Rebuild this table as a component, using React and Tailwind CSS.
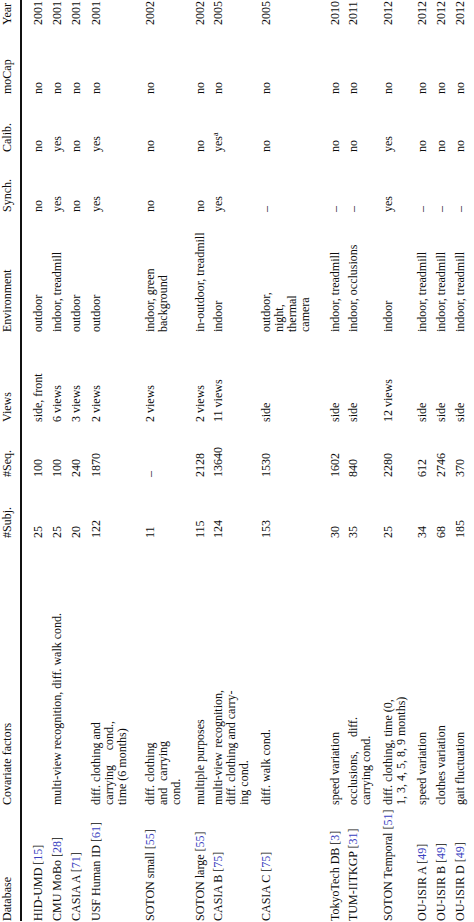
import React from 'react';

const HEAD = ['Database', 'Covariate factors', '#Subj.', '#Seq.', 'Views', 'Environment', 'Synch.', 'Calib.', 'moCap', 'Year'];

// cov lines: a line given as an array of words is set justified over the cell width (cw)
const ROWS = [
  { db: 'HID-UMD', ref: '15', cov: [], subj: '25', seq: '100', views: 'side, front', env: ['outdoor'], synch: 'no', calib: 'no', mocap: 'no', year: '2001', h: 19 },
  { db: 'CMU MoBo', ref: '28', cov: ['multi-view recognition, diff. walk cond.'], subj: '25', seq: '100', views: '6 views', env: ['indoor, treadmill'], synch: 'yes', calib: 'yes', mocap: 'no', year: '2001', h: 19 },
  { db: 'CASIA A', ref: '71', cov: [], subj: '20', seq: '240', views: '3 views', env: ['outdoor'], synch: 'no', calib: 'no', mocap: 'no', year: '2001', h: 20 },
  { db: 'USF Human ID', ref: '61', cw: 84, cov: ['diff. clothing and', ['carrying', 'cond.,'], 'time (6 months)'], subj: '122', seq: '1870', views: '2 views', env: ['outdoor'], synch: 'yes', calib: 'yes', mocap: 'no', year: '2001', h: 54 },
  { db: 'SOTON small', ref: '55', cw: 64, cov: ['diff. clothing', ['and', 'carrying'], 'cond.'], subj: '11', seq: '–', views: '2 views', env: ['indoor, green', 'background'], synch: 'no', calib: 'no', mocap: 'no', year: '2002', h: 50 },
  { db: 'SOTON large', ref: '55', cov: ['multiple purposes'], subj: '115', seq: '2128', views: '2 views', env: ['in-outdoor, treadmill'], synch: 'no', calib: 'no', mocap: 'no', year: '2002', h: 18 },
  { db: 'CASIA B', ref: '75', cw: 115, cov: [['multi-view', 'recognition,'], 'diff. clothing and carry-', 'ing cond.'], subj: '124', seq: '13640', views: '11 views', env: ['indoor'], synch: 'yes', calib: 'yes', sup: 'a', mocap: 'no', year: '2005', h: 48 },
  { db: 'CASIA C', ref: '75', cov: ['diff. walk cond.'], subj: '153', seq: '1530', views: 'side', env: ['outdoor,', 'night,', 'thermal', 'camera'], synch: '–', calib: 'no', mocap: 'no', year: '2005', h: 69 },
  { db: 'TokyoTech DB', ref: '3', cov: ['speed variation'], subj: '30', seq: '1602', views: 'side', env: ['indoor, treadmill'], synch: '–', calib: 'no', mocap: 'no', year: '2010', h: 18 },
  { db: 'TUM-IITKGP', ref: '31', cw: 88, cov: [['occlusions,', 'diff.'], 'carrying cond.'], subj: '35', seq: '840', views: 'side', env: ['indoor, occlusions'], synch: '–', calib: 'no', mocap: 'no', year: '2011', h: 35 },
  { db: 'SOTON Temporal', ref: '51', cov: ['diff. clothing, time (0,', '1, 3, 4, 5, 8, 9 months)'], subj: '25', seq: '2280', views: '12 views', env: ['indoor'], synch: 'yes', calib: 'yes', mocap: 'no', year: '2012', h: 34 },
  { db: 'OU-ISIR A', ref: '49', cov: ['speed variation'], subj: '34', seq: '612', views: 'side', env: ['indoor, treadmill'], synch: '–', calib: 'no', mocap: 'no', year: '2012', h: 19 },
  { db: 'OU-ISIR B', ref: '49', cov: ['clothes variation'], subj: '68', seq: '2746', views: 'side', env: ['indoor, treadmill'], synch: '–', calib: 'no', mocap: 'no', year: '2012', h: 19 },
  { db: 'OU-ISIR D', ref: '49', cov: ['gait fluctuation'], subj: '185', seq: '370', views: 'side', env: ['indoor, treadmill'], synch: '–', calib: 'no', mocap: 'no', year: '2012', h: 19 },
];

const GRID = 'grid grid-cols-[116px_267px_61px_55px_90px_120px_60px_58px_69px_1fr]';

function Cov({ row }) {
  return (
    <div>
      {row.cov.map((line, i) =>
        Array.isArray(line) ? (
          <div key={i} className="flex justify-between" style={{ width: row.cw }}>
            {line.map((w) => <span key={w}>{w}</span>)}
          </div>
        ) : (
          <div key={i} className="whitespace-nowrap">{line}</div>
        )
      )}
    </div>
  );
}

function Row({ row }) {
  return (
    <div className={GRID} style={{ height: row.h }}>
      <div className="whitespace-nowrap">
        {row.db} [<span className="text-[#3a3fc0]">{row.ref}</span>]
      </div>
      <Cov row={row} />
      <div>{row.subj}</div>
      <div>{row.seq}</div>
      <div className="whitespace-nowrap">{row.views}</div>
      <div>
        {row.env.map((e) => <div key={e} className="whitespace-nowrap">{e}</div>)}
      </div>
      <div>{row.synch}</div>
      <div className="whitespace-nowrap">
        {row.calib}
        {row.sup && <sup className="text-[8px]">{row.sup}</sup>}
      </div>
      <div>{row.mocap}</div>
      <div>{row.year}</div>
    </div>
  );
}

export default function App() {
  return (
    <div className="w-[474px] h-[922px] overflow-hidden bg-white">
      <div className="w-[922px] h-[474px] origin-top-left -rotate-90 translate-y-[922px] pl-[1px] text-[12px] leading-[13px] text-[#0d0d0d] font-['Liberation_Serif',serif]">
        <div className={`${GRID} pt-[1px] h-[20px]`}>
          {HEAD.map((h) => <div key={h} className="whitespace-nowrap">{h}</div>)}
        </div>
        <div className="h-[1.5px] bg-[#111]" />
        <div className="pt-[10px]">
          {ROWS.map((r) => <Row key={r.db} row={r} />)}
        </div>
      </div>
    </div>
  );
}
